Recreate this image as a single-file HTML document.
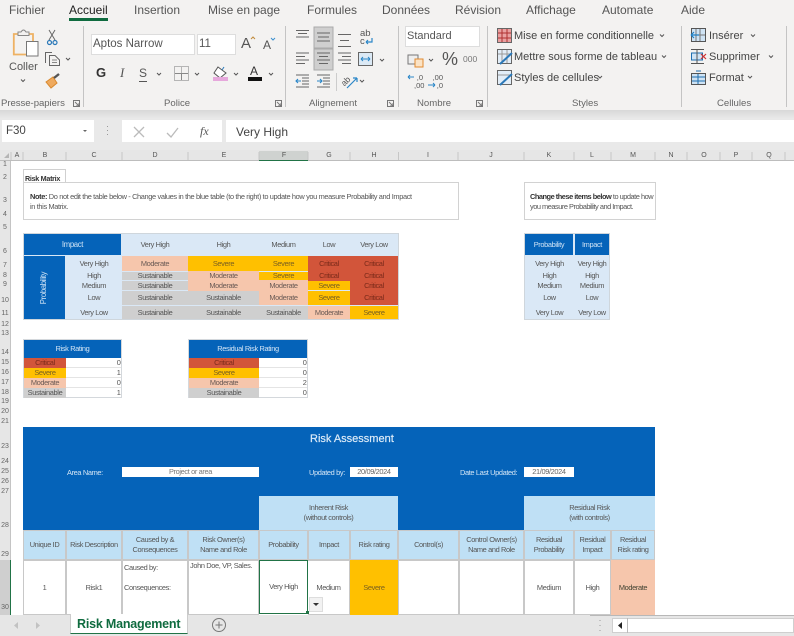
<!DOCTYPE html>
<html><head><meta charset="utf-8"><style>
html,body{margin:0;padding:0;width:794px;height:636px;overflow:hidden;background:#fff}
body{position:relative;font-family:"Liberation Sans",sans-serif;color:#444}
div,span.a{position:absolute;box-sizing:border-box}
.t{white-space:nowrap;line-height:1}
.s{font-size:7.4px;letter-spacing:-.36px;color:#555;white-space:nowrap;line-height:1}
.c{display:flex;align-items:center;justify-content:center;text-align:center;font-size:7.4px;letter-spacing:-.36px;color:#555;line-height:10px;white-space:nowrap}
.r{font-size:11px;color:#444;white-space:nowrap;line-height:14px}
.lab{font-size:9.6px;color:#666;white-space:nowrap;line-height:1;top:99px}
.ch{font-size:7px;color:#555;transform:translateX(-50%);line-height:10px}
.rh{left:0;width:10px;font-size:7px;color:#666;text-align:center;line-height:8px}
.sev{background:#ffc000;color:#7a6020}.mod{background:#f6c6ac;color:#6a5a55}.sus{background:#cfcfcf;color:#555}.cri{background:#d2553a;color:#7a2a1a}
.hb{background:#bfe0f5}.bl{background:#0563b9;color:#e6f0fa}
.b{border:1px solid #c8c8c8}
svg{position:absolute;overflow:visible}
</style></head><body>

<!-- ribbon -->
<div style="left:0;top:0;width:794px;height:110px;background:#f3f2f1"></div>
<div style="left:0;top:110px;width:794px;height:8px;background:linear-gradient(#d8d8d8,#e8e8e8)"></div>
<div style="left:0;top:118px;width:794px;height:32px;background:#e9e9e9"></div>

<div class="t" style="left:9px;top:4px;font-size:12px;color:#555">Fichier</div>
<div class="t" style="left:69px;top:4px;font-size:12px;color:#222">Accueil</div>
<div style="left:69px;top:18px;width:39px;height:2.5px;background:#0f6b3f"></div>
<div class="t" style="left:134px;top:4px;font-size:12px;color:#555">Insertion</div>
<div class="t" style="left:208px;top:4px;font-size:12px;color:#555">Mise en page</div>
<div class="t" style="left:307px;top:4px;font-size:12px;color:#555">Formules</div>
<div class="t" style="left:382px;top:4px;font-size:12px;color:#555">Données</div>
<div class="t" style="left:455px;top:4px;font-size:12px;color:#555">Révision</div>
<div class="t" style="left:526px;top:4px;font-size:12px;color:#555">Affichage</div>
<div class="t" style="left:602px;top:4px;font-size:12px;color:#555">Automate</div>
<div class="t" style="left:681px;top:4px;font-size:12px;color:#555">Aide</div>

<!-- separators -->
<div style="left:83px;top:26px;width:1px;height:81px;background:#c4c4c4"></div>
<div style="left:285px;top:26px;width:1px;height:81px;background:#c4c4c4"></div>
<div style="left:398px;top:26px;width:1px;height:81px;background:#c4c4c4"></div>
<div style="left:487px;top:26px;width:1px;height:81px;background:#c4c4c4"></div>
<div style="left:681px;top:26px;width:1px;height:81px;background:#c4c4c4"></div>
<div style="left:786px;top:26px;width:1px;height:81px;background:#c4c4c4"></div>

<svg style="left:0;top:0" width="794" height="110" fill="none">
<!-- clipboard -->
<path d="M19 34H13.800V54.500H26" stroke="#eeb264" stroke-width="1.800"/>
<path d="M28 34H33V41" stroke="#eeb264" stroke-width="1.800"/>
<path d="M18 35.500V32H21Q23.500 28 26 32H29V35.500Z" stroke="#888" fill="#f3f2f1"/>
<rect x="26.500" y="41.500" width="11.500" height="14.500" fill="#fff" stroke="#777"/>
<path d="M49 30L55 40M55 30L49 40" stroke="#666"/>
<circle cx="49.500" cy="42.500" r="2" stroke="#2a78b8" stroke-width="1.200"/><circle cx="55" cy="42.500" r="2" stroke="#2a78b8" stroke-width="1.200"/>
<path d="M45.500 63V52.500H52M49.500 65.500V55.500H55L59.500 60V65.500Z" stroke="#666"/>
<path d="M52 60H57M52 62.500H57" stroke="#888"/>
<path d="M46 82L53 77L57 83L51 88Z" fill="#efaa5e" stroke="#d98a30"/>
<path d="M54 78L59 74" stroke="#555" stroke-width="2.400"/>
<path d="M66 58L68 60L70 58" stroke="#555"/><path d="M21 79.500L23 81.500L25 79.500" stroke="#555"/>
<!-- launchers -->
<g stroke="#777"><rect x="73.500" y="100.500" width="6" height="6"/><path d="M75 102L79 106M79 103V106H76"/>
<rect x="275.500" y="100.500" width="6" height="6"/><path d="M277 102L281 106M281 103V106H278"/>
<rect x="387.500" y="100.500" width="6" height="6"/><path d="M389 102L393 106M393 103V106H390"/>
<rect x="476.500" y="100.500" width="6" height="6"/><path d="M478 102L482 106M482 103V106H479"/></g>
<!-- font row -->
<g stroke="#555" fill="none">
<path d="M189 44L191 46L193 44M229 44L231 46L233 44M157 73L159 75L161 73M195 73L197 75L199 73M234 73L236 75L238 73M269 73L271 75L273 73"/>
<path d="M251 39L253 37L255 39" stroke="#c08a3a"/><path d="M271 38L273 40L275 38" stroke="#3a8fd0"/>
</g>
<path d="M139 81.500H147" stroke="#555"/>
<g stroke="#b5b5b5"><rect x="174.500" y="66.500" width="14" height="14"/><path d="M181.500 67V80"/></g><path d="M175 73.500H188M181.500 73V80" stroke="#888"/>
<path d="M218 67L226 73L220 78L214 73Z" stroke="#555" fill="#fff"/><path d="M222 70L224 67" stroke="#2a78b8"/>
<rect x="213" y="77" width="15" height="4" fill="#e6a8dc"/>
<rect x="248" y="77" width="14" height="4" fill="#111"/>
<!-- alignment -->
<rect x="314" y="27" width="19" height="21" fill="#cfcfcf" stroke="#aaa"/>
<rect x="314" y="49" width="19" height="21" fill="#cfcfcf" stroke="#aaa"/>
<g stroke="#666" stroke-width="1.100">
<path d="M296 30.500H309M298 33.500H307M296 37H309"/>
<path d="M317 33H330M318 37H329M317 41H330"/>
<path d="M338 37.500H351M340 43.500H349M338 49.500H351" transform="translate(0,-3)"/>
<path d="M296 53H309M296 56.500H305M296 60H309M296 63.500H305"/>
<path d="M317 53H330M319 56.500H328M317 60H330M319 63.500H328"/>
<path d="M338 53H351M342 56.500H351M338 60H351M342 63.500H351"/>
<path d="M302 78H309M302 81H309M302 84H309M296 87H309M296 75H309"/>
<path d="M323 78H330M323 81H330M323 84H330M317 87H330M317 75H330"/>
</g>
<path d="M296 81H301M298 79L296 81L298 83M317 81H322M320 79L322 81L320 83" stroke="#2a86c8" stroke-width="1.100"/>
<path d="M366 42H372V38M366 42L368 40M366 42L368 44" stroke="#2a86c8" stroke-width="1.200"/>
<rect x="358.500" y="52.500" width="14" height="13" fill="#dbe9f5" stroke="#666"/><path d="M361 59H370M361 59L363 57M361 59L363 61M370 59L368 57M370 59L368 61" stroke="#2a86c8"/>
<path d="M380 59L382 61L384 59M360 80L362 82L364 80" stroke="#555"/>
<path d="M347 88L357 78M357 78H353M357 78V82" stroke="#2a86c8" stroke-width="1.200"/>
<path d="M336.500 73V91" stroke="#ccc"/>
<!-- number -->
<path d="M474 36L476 38L478 36M429 59L431 61L433 59" stroke="#555"/>
<rect x="408" y="55" width="10" height="9" fill="#eee" stroke="#777"/><rect x="415" y="59" width="8" height="8" fill="#fbe3c5" stroke="#e08a30"/>
<path d="M408 77H414M408 77L410 75M408 77L410 79M428 85H435M435 85L433 83M435 85L433 87" stroke="#2a86c8"/>
<!-- styles icons -->
<rect x="497.500" y="28.500" width="14" height="14" fill="#e9a0a0" stroke="#666"/><path d="M502 29V42M507 29V42M498 33H511M498 38H511" stroke="#b03030"/>
<rect x="497.500" y="49.500" width="14" height="14" fill="#e2edf7" stroke="#666"/><path d="M498 54H511M502 50V63M507 50V63" stroke="#999"/><path d="M500 64L512 53" stroke="#2a78b8" stroke-width="2"/>
<rect x="497.500" y="70.500" width="14" height="14" fill="#e2edf7" stroke="#666"/><path d="M498 75H511" stroke="#999"/><path d="M500 85L512 74" stroke="#2a78b8" stroke-width="2"/>
<g stroke="#555"><path d="M660 34.500L662 36.500L664 34.500M662 55.500L664 57.500L666 55.500M598 76L600 78L602 76M751 34.500L753 36.500L755 34.500M769 55.500L771 57.500L773 55.500M748 76L750 78L752 76"/></g>
<!-- cells icons -->
<rect x="691.500" y="28.500" width="14" height="13" fill="#cfe3f4" stroke="#555"/><path d="M696 29V41M700 29V41M692 35H705" stroke="#777"/><path d="M691 35H699M691 35L694 32M691 35L694 38" stroke="#1f7fc4" stroke-width="1.200"/>
<rect x="691.500" y="53" width="11" height="7" fill="#cfe3f4" stroke="#1f6fb0"/><path d="M691 49.500H704M691 63.500H704M697 49V64" stroke="#555"/><path d="M701 54L706 59M706 54L701 59" stroke="#d03030" stroke-width="1.200"/>
<rect x="691.500" y="73.500" width="14" height="11" fill="#cfe3f4" stroke="#555"/><path d="M692 77H705M692 81H705M698 74V84" stroke="#1f6fb0"/><path d="M696 71H701" stroke="#1f6fb0"/>
</svg>
<div class="t" style="left:9px;top:62px;font-size:11px;color:#555">Coller</div>
<div class="lab" style="left:1px;letter-spacing:-.05px">Presse-papiers</div>
<div class="lab" style="left:164px">Police</div>
<div class="lab" style="left:309px">Alignement</div>
<div class="lab" style="left:417px">Nombre</div>
<div class="lab" style="left:572px">Styles</div>
<div class="lab" style="left:717px">Cellules</div>

<div style="left:91px;top:34px;width:104px;height:21px;background:#fff;border:1px solid #ddd"></div>
<div class="t" style="left:93px;top:39px;font-size:11.500px;color:#555">Aptos Narrow</div>
<div style="left:197px;top:34px;width:39px;height:21px;background:#fff;border:1px solid #ddd"></div>
<div class="t" style="left:199px;top:39px;font-size:11.500px;color:#555">11</div>
<div class="t" style="left:241px;top:36px;font-size:15px;color:#555">A</div>
<div class="t" style="left:263px;top:39px;font-size:12px;color:#555">A</div>
<div class="t" style="left:96px;top:66px;font-size:13px;font-weight:bold;color:#333">G</div>
<div class="t" style="left:120px;top:66px;font-size:13px;font-style:italic;font-family:'Liberation Serif',serif;color:#555">I</div>
<div class="t" style="left:139px;top:67px;font-size:12px;color:#555">S</div>
<div class="t" style="left:250px;top:65px;font-size:12px;color:#333">A</div>

<div class="t" style="left:360px;top:30px;font-size:9.500px;color:#555;line-height:7.500px;width:12px">ab<br>c</div>
<div class="t" style="left:341px;top:77px;font-size:8.500px;color:#555;transform:rotate(-45deg);transform-origin:50% 50%">ab</div>

<div style="left:405px;top:26px;width:75px;height:21px;background:#fff;border:1px solid #ddd"></div>
<div class="t" style="left:407px;top:31px;font-size:11px;color:#555">Standard</div>
<div class="t" style="left:442px;top:50px;font-size:18px;color:#555">%</div>
<div class="t" style="left:463px;top:55px;font-size:8.500px;color:#777">000</div>
<div class="t" style="left:414px;top:74px;font-size:7.500px;line-height:7.500px;color:#555;text-align:right;width:9px">,0<br>,00</div>
<div class="t" style="left:430px;top:74px;font-size:7.500px;line-height:7.500px;color:#555;width:13px;text-align:right">,00<br>,0</div>

<div class="r" style="left:514px;top:29px">Mise en forme conditionnelle</div>
<div class="r" style="left:514px;top:50px">Mettre sous forme de tableau</div>
<div class="r" style="left:514px;top:71px">Styles de cellules</div>
<div class="r" style="left:709px;top:29px">Insérer</div>
<div class="r" style="left:709px;top:50px">Supprimer</div>
<div class="r" style="left:709px;top:71px">Format</div>

<!-- formula bar -->
<div style="left:2px;top:120px;width:92px;height:22px;background:#fff"></div>
<div class="t" style="left:6px;top:126px;font-size:11.500px;color:#444">F30</div>
<div style="left:122px;top:120px;width:100px;height:22px;background:#fff"></div>
<div style="left:226px;top:120px;width:568px;height:22px;background:#fff"></div>
<div class="t" style="left:236px;top:126px;font-size:12px;color:#444">Very High</div>
<svg style="left:0;top:0" width="794" height="150" fill="none">
<path d="M83 130L87 130L85 132Z" fill="#666"/>
<path d="M107.500 126V127M107.500 130V131M107.500 134V135" stroke="#999"/>
<path d="M134 127L144 137M144 127L134 137" stroke="#bbb" stroke-width="1.300"/>
<path d="M167 133L171 137L178 128" stroke="#bbb" stroke-width="1.300"/>
</svg>
<div class="t" style="left:200px;top:125px;font-size:12px;font-style:italic;font-family:'Liberation Serif',serif;color:#555">fx</div>

<!-- column headers -->
<div style="left:0;top:150px;width:794px;height:11px;background:#e6e6e6;border-bottom:1px solid #bdbdbd"></div>
<div style="left:259px;top:151px;width:49px;height:10px;background:#cfd2d0;border-bottom:1.500px solid #217346"></div>
<svg style="left:0;top:150px" width="794" height="11" fill="none"><path d="M9 3V8H4Z" fill="#b5b5b5"/>
<path d="M11 2V10M23 2V10M66 2V10M122 2V10M188 2V10M259 2V10M308 2V10M350 2V10M398.500 2V10M458 2V10M524 2V10M574 2V10M611 2V10M655 2V10M687 2V10M720 2V10M752 2V10M785 2V10" stroke="#c6c6c6"/></svg>
<div class="ch" style="left:17px;top:151px">A</div><div class="ch" style="left:45px;top:151px">B</div><div class="ch" style="left:94px;top:151px">C</div><div class="ch" style="left:155px;top:151px">D</div><div class="ch" style="left:224px;top:151px">E</div><div class="ch" style="left:284px;top:151px">F</div><div class="ch" style="left:329px;top:151px">G</div><div class="ch" style="left:374px;top:151px">H</div><div class="ch" style="left:428px;top:151px">I</div><div class="ch" style="left:491px;top:151px">J</div><div class="ch" style="left:549px;top:151px">K</div><div class="ch" style="left:592px;top:151px">L</div><div class="ch" style="left:633px;top:151px">M</div><div class="ch" style="left:671px;top:151px">N</div><div class="ch" style="left:704px;top:151px">O</div><div class="ch" style="left:736px;top:151px">P</div><div class="ch" style="left:769px;top:151px">Q</div>

<!-- row headers -->
<div style="left:0;top:161px;width:11px;height:454px;background:#e6e6e6;border-right:1px solid #c4c4c4"></div>
<div style="left:0;top:560px;width:11px;height:55px;background:#cfcfcf;border-right:1.500px solid #217346"></div>
<div class="rh" style="top:161px">1</div><div class="rh" style="top:174px">2</div><div class="rh" style="top:197px">3</div><div class="rh" style="top:211px">4</div><div class="rh" style="top:224px">5</div><div class="rh" style="top:248px">6</div><div class="rh" style="top:262px">7</div><div class="rh" style="top:272px">8</div><div class="rh" style="top:281px">9</div><div class="rh" style="top:297px">10</div><div class="rh" style="top:310px">11</div><div class="rh" style="top:321px">12</div><div class="rh" style="top:330px">13</div><div class="rh" style="top:349px">14</div><div class="rh" style="top:359px">15</div><div class="rh" style="top:369px">16</div><div class="rh" style="top:379px">17</div><div class="rh" style="top:389px">18</div><div class="rh" style="top:398px">19</div><div class="rh" style="top:408px">20</div><div class="rh" style="top:418px">21</div><div class="rh" style="top:443px">23</div><div class="rh" style="top:458px">24</div><div class="rh" style="top:468px">25</div><div class="rh" style="top:478px">26</div><div class="rh" style="top:488px">27</div><div class="rh" style="top:522px">28</div><div class="rh" style="top:551px">29</div><div class="rh" style="top:604px">30</div>

<!-- Risk Matrix header and note -->
<div style="left:23px;top:169px;width:43px;height:15px;border:1px solid #d0d0d0;border-bottom:0"></div>
<div class="t" style="left:25px;top:175px;font-size:7.200px;letter-spacing:-.3px;font-weight:bold;color:#333">Risk Matrix</div>
<div style="left:23px;top:182px;width:436px;height:38px;border:1.500px solid #d2d2d2;background:#fff"></div>
<div class="s" style="left:30px;top:192px;line-height:10px"><b style="color:#333">Note:</b> Do not edit the table below - Change values in the blue table (to the right) to update how you measure Probability and Impact<br>in this Matrix.</div>
<div style="left:524px;top:182px;width:132px;height:38px;border:1.500px solid #d2d2d2;background:#fff"></div>
<div class="s" style="left:530px;top:192px;line-height:10px;letter-spacing:-.48px"><b style="color:#333">Change these items below</b> to update how<br>you measure Probability and Impact.</div>

<!-- Matrix -->
<div style="left:23px;top:233px;width:376px;height:87px;background:#dae8f6;border:1px solid #cfd6dc"></div>
<div class="c bl" style="left:24px;top:234px;width:97px;height:21px;color:#cfe3f5;font-size:7.800px">Impact</div>
<div class="c bl" style="left:24px;top:256px;width:41px;height:63px"><span style="transform:rotate(-90deg);color:#cfe3f5;font-size:7.800px">Probability</span></div>
<div class="c" style="left:122px;top:234px;width:66px;height:21px">Very High</div>
<div class="c" style="left:188px;top:234px;width:71px;height:21px">High</div>
<div class="c" style="left:259px;top:234px;width:49px;height:21px">Medium</div>
<div class="c" style="left:308px;top:234px;width:42px;height:21px">Low</div>
<div class="c" style="left:350px;top:234px;width:48px;height:21px">Very Low</div>
<div class="c" style="left:66px;top:256px;width:56px;height:15px">Very High</div>
<div class="c" style="left:66px;top:271px;width:56px;height:9px">High</div>
<div class="c" style="left:66px;top:281px;width:56px;height:9px">Medium</div>
<div class="c" style="left:66px;top:291px;width:56px;height:14px">Low</div>
<div class="c" style="left:66px;top:306px;width:56px;height:13px">Very Low</div>

<div class="c mod" style="left:122px;top:256px;width:66px;height:15px">Moderate</div>
<div class="c sev" style="left:188px;top:256px;width:71px;height:15px">Severe</div>
<div class="c sev" style="left:259px;top:256px;width:49px;height:15px">Severe</div>
<div class="c cri" style="left:308px;top:256px;width:42px;height:15px">Critical</div>
<div class="c cri" style="left:350px;top:256px;width:48px;height:15px">Critical</div>

<div class="c sus" style="left:122px;top:272px;width:66px;height:8px">Sustainable</div>
<div class="c mod" style="left:188px;top:271px;width:71px;height:10px">Moderate</div>
<div class="c sev" style="left:259px;top:272px;width:49px;height:8px">Severe</div>
<div class="c cri" style="left:308px;top:271px;width:42px;height:10px">Critical</div>
<div class="c cri" style="left:350px;top:271px;width:48px;height:10px">Critical</div>

<div class="c sus" style="left:122px;top:281px;width:66px;height:9px">Sustainable</div>
<div class="c mod" style="left:188px;top:281px;width:71px;height:10px">Moderate</div>
<div class="c mod" style="left:259px;top:280px;width:49px;height:11px">Moderate</div>
<div class="c sev" style="left:308px;top:281px;width:42px;height:9px">Severe</div>
<div class="c cri" style="left:350px;top:281px;width:48px;height:10px">Critical</div>

<div class="c sus" style="left:122px;top:291px;width:66px;height:14px">Sustainable</div>
<div class="c sus" style="left:188px;top:291px;width:71px;height:14px">Sustainable</div>
<div class="c mod" style="left:259px;top:291px;width:49px;height:14px">Moderate</div>
<div class="c sev" style="left:308px;top:291px;width:42px;height:14px">Severe</div>
<div class="c cri" style="left:350px;top:291px;width:48px;height:14px">Critical</div>

<div class="c sus" style="left:122px;top:306px;width:66px;height:13px">Sustainable</div>
<div class="c sus" style="left:188px;top:306px;width:71px;height:13px">Sustainable</div>
<div class="c sus" style="left:259px;top:306px;width:49px;height:13px">Sustainable</div>
<div class="c mod" style="left:308px;top:306px;width:42px;height:13px">Moderate</div>
<div class="c sev" style="left:350px;top:306px;width:48px;height:13px">Severe</div>

<!-- right blue table -->
<div style="left:524px;top:233px;width:86px;height:87px;background:#dae8f6;border:1px solid #cfd6dc"></div>
<div class="c bl" style="left:525px;top:234px;width:48px;height:21px;color:#cfe3f5">Probability</div>
<div class="c bl" style="left:575px;top:234px;width:34px;height:21px;color:#cfe3f5">Impact</div>
<div class="c" style="left:525px;top:256px;width:49px;height:15px">Very High</div><div class="c" style="left:574px;top:256px;width:36px;height:15px">Very High</div>
<div class="c" style="left:525px;top:271px;width:49px;height:9px">High</div><div class="c" style="left:574px;top:271px;width:36px;height:9px">High</div>
<div class="c" style="left:525px;top:281px;width:49px;height:9px">Medium</div><div class="c" style="left:574px;top:281px;width:36px;height:9px">Medium</div>
<div class="c" style="left:525px;top:291px;width:49px;height:14px">Low</div><div class="c" style="left:574px;top:291px;width:36px;height:14px">Low</div>
<div class="c" style="left:525px;top:306px;width:49px;height:13px">Very Low</div><div class="c" style="left:574px;top:306px;width:36px;height:13px">Very Low</div>

<!-- Risk rating -->
<div style="left:23px;top:339px;width:99px;height:59px;border:1px solid #d4d8dc;background:#fff"></div>
<div class="c bl" style="left:24px;top:340px;width:97px;height:18px;color:#d5e6f6">Risk Rating</div>
<div class="c cri" style="left:24px;top:358px;width:42px;height:10px">Critical</div>
<div class="c sev" style="left:24px;top:368px;width:42px;height:10px">Severe</div>
<div class="c mod" style="left:24px;top:378px;width:42px;height:10px">Moderate</div>
<div class="c sus" style="left:24px;top:388px;width:42px;height:9.500px">Sustainable</div>
<div class="c" style="left:66px;top:358px;width:54.500px;height:10px;justify-content:flex-end;border-bottom:1px solid #e4e4e4">0</div>
<div class="c" style="left:66px;top:368px;width:54.500px;height:10px;justify-content:flex-end;border-bottom:1px solid #e4e4e4">1</div>
<div class="c" style="left:66px;top:378px;width:54.500px;height:10px;justify-content:flex-end;border-bottom:1px solid #e4e4e4">0</div>
<div class="c" style="left:66px;top:388px;width:54.500px;height:9.500px;justify-content:flex-end">1</div>

<div style="left:188px;top:339px;width:120px;height:59px;border:1px solid #d4d8dc;background:#fff"></div>
<div class="c bl" style="left:189px;top:340px;width:118px;height:18px;color:#d5e6f6">Residual Risk Rating</div>
<div class="c cri" style="left:189px;top:358px;width:70px;height:10px">Critical</div>
<div class="c sev" style="left:189px;top:368px;width:70px;height:10px">Severe</div>
<div class="c mod" style="left:189px;top:378px;width:70px;height:10px">Moderate</div>
<div class="c sus" style="left:189px;top:388px;width:70px;height:9.500px">Sustainable</div>
<div class="c" style="left:259px;top:358px;width:47.500px;height:10px;justify-content:flex-end;border-bottom:1px solid #e4e4e4">0</div>
<div class="c" style="left:259px;top:368px;width:47.500px;height:10px;justify-content:flex-end;border-bottom:1px solid #e4e4e4">0</div>
<div class="c" style="left:259px;top:378px;width:47.500px;height:10px;justify-content:flex-end;border-bottom:1px solid #e4e4e4">2</div>
<div class="c" style="left:259px;top:388px;width:47.500px;height:9.500px;justify-content:flex-end">0</div>

<!-- Banner -->
<div style="left:23px;top:427px;width:632px;height:103px;background:#0563b9"></div>
<div class="t" style="left:310px;top:434px;font-size:11px;color:#dcebf8;-webkit-text-stroke:.2px #dcebf8">Risk Assessment</div>
<div class="s" style="left:67px;top:469px;color:#d5e6f6">Area Name:</div>
<div class="c" style="left:122px;top:467px;width:137px;height:10px;background:#fff;color:#777">Project or area</div>
<div class="s" style="left:309px;top:469px;color:#d5e6f6">Updated by:</div>
<div class="c" style="left:350px;top:467px;width:48px;height:10px;background:#fff;color:#666">20/09/2024</div>
<div class="s" style="left:460px;top:469px;color:#d5e6f6">Date Last Updated:</div>
<div class="c" style="left:524px;top:467px;width:50px;height:10px;background:#fff;color:#666">21/09/2024</div>

<div class="c hb" style="left:259px;top:496px;width:139px;height:34px">Inherent Risk<br>(without controls)</div>
<div class="c hb" style="left:524px;top:496px;width:131px;height:34px">Residual Risk<br>(with controls)</div>

<!-- table headers -->
<div class="c hb b" style="left:23px;top:530px;width:43px;height:30px">Unique ID</div>
<div class="c hb b" style="left:66px;top:530px;width:56px;height:30px">Risk Description</div>
<div class="c hb b" style="left:122px;top:530px;width:66px;height:30px">Caused by &amp;<br>Consequences</div>
<div class="c hb b" style="left:188px;top:530px;width:71px;height:30px">Risk Owner(s)<br>Name and Role</div>
<div class="c hb b" style="left:259px;top:530px;width:49px;height:30px">Probability</div>
<div class="c hb b" style="left:308px;top:530px;width:42px;height:30px">Impact</div>
<div class="c hb b" style="left:350px;top:530px;width:48px;height:30px">Risk rating</div>
<div class="c hb b" style="left:398px;top:530px;width:61px;height:30px">Control(s)</div>
<div class="c hb b" style="left:459px;top:530px;width:65px;height:30px">Control Owner(s)<br>Name and Role</div>
<div class="c hb b" style="left:524px;top:530px;width:50px;height:30px">Residual<br>Probability</div>
<div class="c hb b" style="left:574px;top:530px;width:37px;height:30px">Residual<br>Impact</div>
<div class="c hb b" style="left:611px;top:530px;width:44px;height:30px">Residual<br>Risk rating</div>

<!-- data row -->
<div class="c b" style="left:23px;top:560px;width:43px;height:55px">1</div>
<div class="c b" style="left:66px;top:560px;width:56px;height:55px">Risk1</div>
<div class="b" style="left:122px;top:560px;width:66px;height:55px"></div>
<div class="s" style="left:124px;top:564px">Caused by:</div>
<div class="s" style="left:124px;top:584px">Consequences:</div>
<div class="b" style="left:188px;top:560px;width:71px;height:55px"></div>
<div class="s" style="left:190px;top:562px">John Doe, VP, Sales.</div>
<div class="c" style="left:259px;top:560px;width:49px;height:54px;border:1.200px solid #217346">Very High</div>
<div class="c b" style="left:308px;top:560px;width:42px;height:55px;border-left:0">Medium</div>
<div class="c sev" style="left:350px;top:560px;width:48px;height:55px">Severe</div>
<div class="b" style="left:398px;top:560px;width:61px;height:55px"></div>
<div class="b" style="left:459px;top:560px;width:65px;height:55px"></div>
<div class="c b" style="left:524px;top:560px;width:50px;height:55px">Medium</div>
<div class="c b" style="left:574px;top:560px;width:37px;height:55px">High</div>
<div class="c mod" style="left:611px;top:560px;width:44px;height:55px;color:#443">Moderate</div>
<div style="left:306px;top:611px;width:3px;height:3px;background:#217346"></div>
<div style="left:309px;top:597px;width:14px;height:15px;background:#f2f2f2;border:1px solid #ddd"></div>
<svg style="left:0;top:0" width="794" height="636" fill="none"><path d="M313 603H319L316 606Z" fill="#333"/></svg>

<!-- tab bar -->
<div style="left:0;top:615px;width:794px;height:21px;background:#e6e6e6"></div>
<div style="left:590px;top:615px;width:204px;height:1px;background:#b8b8b8"></div>
<div style="left:70px;top:614px;width:118px;height:20px;background:#fff;border-bottom:1.500px solid #217346;border-left:1px solid #ccc;border-right:1px solid #ccc"></div>
<div class="t" style="left:77px;top:618px;font-size:12.500px;font-weight:bold;color:#0f6b3f;letter-spacing:-.2px">Risk Management</div>
<div style="left:612px;top:618px;width:182px;height:15px;background:#fff;border:1px solid #cfcfcf"></div>
<svg style="left:0;top:615px" width="794" height="21" fill="none">
<path d="M18 7L14 10.500L18 14Z" fill="#c2c2c2"/><path d="M36 7L40 10.500L36 14Z" fill="#c2c2c2"/>
<circle cx="219" cy="10" r="6.500" stroke="#777"/><path d="M215.500 10H222.500M219 6.500V13.500" stroke="#777"/>
<path d="M600 5V6M600 10V11M600 15V16" stroke="#999"/>
<path d="M627.500 3V18" stroke="#bbb"/><path d="M622 7L618 10.500L622 14Z" fill="#222"/>
</svg>
</body></html>
